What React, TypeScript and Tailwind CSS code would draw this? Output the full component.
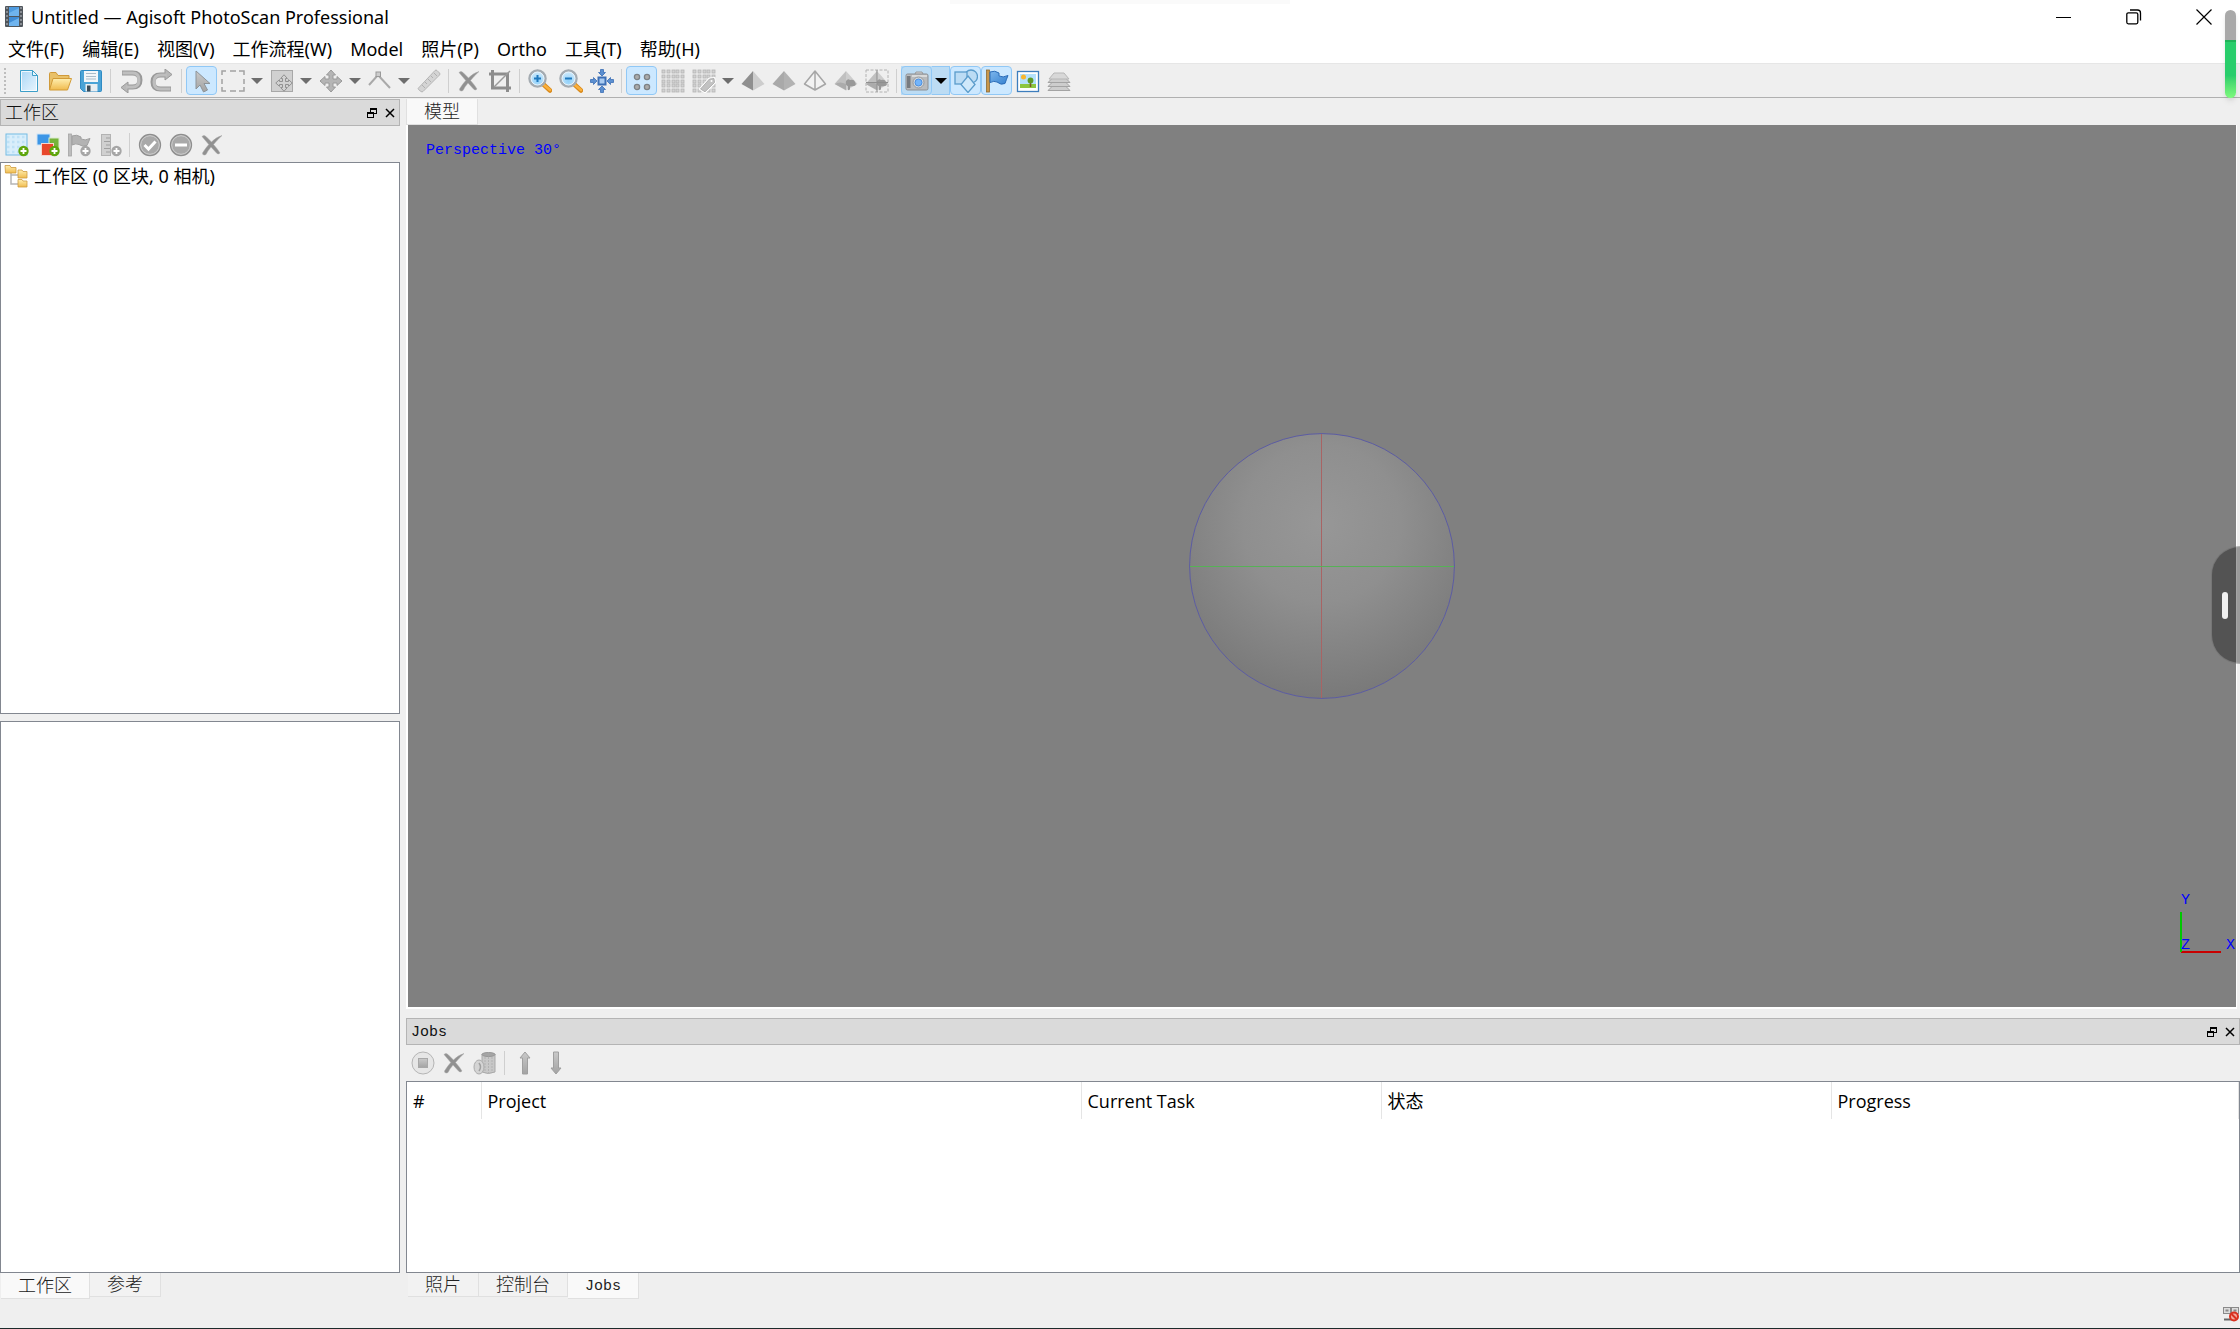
import type { ReactNode } from "react"

const UI = "font-['Open_Sans','Noto_Sans_CJK_SC',sans-serif]"
const MENU = "font-['Noto_Sans','Noto_Sans_CJK_SC',sans-serif]"
const SONG = "font-['Liberation_Mono','Noto_Sans_CJK_SC',monospace] font-light"

function Svg({ children, size = 24 }: { children: ReactNode; size?: number }) {
  return (
    <svg
      viewBox={`0 0 ${size} ${size}`}
      width={size}
      height={size}
      fill="none"
      aria-hidden="true"
      className="shrink-0"
    >
      {children}
    </svg>
  )
}

/* ---------- shared gradients ---------- */

function Defs() {
  return (
    <svg width="0" height="0" className="absolute" aria-hidden="true">
      <defs>
        <linearGradient id="gray" x1="0" y1="0" x2="0" y2="1">
          <stop offset="0" stopColor="#c9c9c9" />
          <stop offset="1" stopColor="#a3a3a3" />
        </linearGradient>
        <linearGradient id="sky" x1="0" y1="0" x2="1" y2="1">
          <stop offset="0" stopColor="#a9d6f5" />
          <stop offset="1" stopColor="#eaf6fe" />
        </linearGradient>
        <linearGradient id="folder" x1="0" y1="0" x2="0" y2="1">
          <stop offset="0" stopColor="#ffefb0" />
          <stop offset="1" stopColor="#f0bb4e" />
        </linearGradient>
        <linearGradient id="flag" x1="0" y1="0" x2="1" y2="1">
          <stop offset="0" stopColor="#7db6ec" />
          <stop offset="1" stopColor="#3480cf" />
        </linearGradient>
        <radialGradient id="lens" cx="0.5" cy="0.65" r="0.6">
          <stop offset="0" stopColor="#8ed0fa" />
          <stop offset="1" stopColor="#d2ebfb" />
        </radialGradient>
      </defs>
    </svg>
  )
}

/* ---------- icons ---------- */

const AppIcon = () => (
  <Svg>
    <rect x="3" y="1" width="18" height="21" rx="1" fill="#50565c" />
    <rect x="7" y="2" width="10" height="9" fill="#4e9be0" />
    <rect x="7" y="12" width="10" height="9" fill="#3f8cd6" />
    <path d="M7 8l10-5v8H7z M7 18l10-5v8H7z" fill="#6fb4ee" />
    <path d="M5 2v19M19 2v19" stroke="#9aa0a6" strokeWidth="1.500" strokeDasharray="2 2" />
  </Svg>
)

const NewIcon = () => (
  <Svg>
    <path d="M3.500 1.500h12l5 5v16h-17z" fill="url(#sky)" stroke="#3d9fc9" />
    <path d="M4.500 2.500h11l4 4v15h-15z" stroke="#fff" strokeOpacity="0.800" />
    <path d="M15.500 1.500v5h5z" fill="#eaf8ff" stroke="#3d9fc9" strokeLinejoin="round" />
  </Svg>
)

const OpenIcon = () => (
  <Svg>
    <path d="M1.500 20.500v-16q0-1 1-1h5.500l2 3h11v5" fill="#e9c169" stroke="#d09a3a" />
    <path d="M5 9.500h18.500l-4 11.500h-18z" fill="url(#folder)" stroke="#d29b37" strokeLinejoin="round" />
  </Svg>
)

const SaveIcon = () => (
  <Svg>
    <path d="M1.500 2.500q0-1 1-1h19q1 0 1 1v19q0 1-1 1h-17l-3-3z" fill="#4aa3d6" stroke="#2f8bc4" />
    <rect x="5" y="2" width="14" height="11" fill="#f2f6f9" />
    <path d="M7 4.500h10M7 7.500h10M7 10h10" stroke="#a9bcc9" />
    <rect x="6.500" y="15" width="12" height="7.500" fill="#e8eef2" />
    <rect x="8" y="16.500" width="3.500" height="6" fill="#3c4c57" />
  </Svg>
)

const UndoIcon = () => (
  <Svg>
    <path d="M3 4h10.500q7.500 0 7.500 7t-7.500 7H8" stroke="#999" strokeWidth="5" />
    <path d="M9 13v11l-7-5.500z" fill="#b8b8b8" stroke="#999" strokeLinejoin="round" />
    <path d="M3.500 4h10q6.500 0 6.500 7t-6.500 7H7" stroke="#bebebe" strokeWidth="3" />
  </Svg>
)

const RedoIcon = () => (
  <Svg>
    <path d="M21 20H10.500Q3 20 3 13t7.500-7H16" stroke="#999" strokeWidth="5" />
    <path d="M15 0v11l7-5.500z" fill="#b8b8b8" stroke="#999" strokeLinejoin="round" />
    <path d="M20.500 20h-10Q4 20 4 13t6.500-7H17" stroke="#bebebe" strokeWidth="3" />
  </Svg>
)

const PointerIcon = () => (
  <Svg>
    <path
      d="M6 2v18l4-4 3.500 7 4-2-3.500-6.500h6z"
      fill="url(#gray)"
      stroke="#8d9499"
      strokeLinejoin="round"
    />
  </Svg>
)

const MarqueeIcon = () => (
  <Svg>
    <path
      d="M1 6V2h4M9 2h6M18 2h5v4M23 10v5M23 18v4h-5M15 22H9M5 22H1v-4M1 15v-5"
      stroke="#a3a3a3"
      strokeWidth="1.500"
    />
  </Svg>
)

const ARROWS4 =
  "M12 1l4.500 5H14v4h4V7.500L23 12l-5 4.500V14h-4v4h2.500L12 23l-4.500-5H10v-4H6v2.500L1 12l5-4.500V10h4V6H7.500z"

const MoveBoxIcon = () => (
  <Svg>
    <rect x="1.500" y="1.500" width="21" height="21" fill="#d0d0d0" stroke="#a8a8a8" />
    <g transform="translate(5 5) scale(0.750)">
      <path d={ARROWS4} fill="#d2d2d2" stroke="#909090" strokeWidth="1.300" />
    </g>
  </Svg>
)

const MoveIcon = () => (
  <Svg>
    <path d={ARROWS4} fill="#b5b5b5" stroke="#9a9a9a" strokeLinejoin="round" />
  </Svg>
)

const PolylineIcon = () => (
  <Svg>
    <path d="M1 16L10 6l12 13" stroke="#a9a9a9" strokeWidth="2" />
    <rect x="8" y="3" width="4.500" height="4.500" fill="#ccc" stroke="#999" />
  </Svg>
)

const RulerIcon = () => (
  <Svg>
    <path
      d="M1.500 19L18 1.500q1-1 2 0l2.500 2.500q1 1 0 2L6 22.500q-1 .8-2 0l-2.500-2q-.8-.8 0-1.500z"
      fill="#d4d4d4"
      stroke="#b5b5b5"
    />
    <path d="M5 16l3 3M8 13l2 2M11 10l3 3M14 7l2 2M17 4l3 3" stroke="#b0b0b0" />
  </Svg>
)

const CrossIcon = () => (
  <Svg>
    <path
      d="M2 3.500Q4 1.500 6.500 4L11.500 9Q16 4 22 2.500Q17 7 13.500 11.500Q18 16.500 20 20Q18 22 16.500 20L11 14Q7.500 18 6 21.500Q2.500 23 2.500 20Q5.500 15 8.800 11.500Q5 7 2 3.500z"
      fill="#919191"
      stroke="#a8a8a8"
      strokeWidth="0.500"
    />
  </Svg>
)

const CropIcon = () => (
  <Svg>
    <path d="M4.500 1v18H23M1 5h18.500v18" stroke="#8d8d8d" strokeWidth="3" />
    <path d="M6 18L22 2" stroke="#9a9a9a" strokeWidth="1.500" />
  </Svg>
)

function ZoomIcon({ plus }: { plus?: boolean }) {
  return (
    <Svg>
      <path d="M15 15l7 6.500" stroke="#d98a1c" strokeWidth="4.500" strokeLinecap="round" />
      <path d="M16 16l6 5" stroke="#fbb03b" strokeWidth="2.500" strokeLinecap="round" />
      <circle cx="9.500" cy="9.500" r="8" fill="url(#lens)" stroke="#a4abb1" strokeWidth="2.500" />
      <circle cx="9.500" cy="9.500" r="6.500" stroke="#e8f3fa" />
      <path d={plus ? "M6 9.500h7M9.500 6v7" : "M6 9.500h7"} stroke="#1f78bd" strokeWidth="2" />
    </Svg>
  )
}

const FitIcon = () => (
  <Svg>
    <g fill="#5b8fd0" stroke="#3c6fb5" strokeWidth="0.800">
      <rect x="8.500" y="8.500" width="7" height="7" fill="#aacbf0" strokeWidth="2" />
      <path d="M10.500 0.500h3v3h2L12 7 8.500 3.500h2z" />
      <path d="M10.500 23.500h3v-3h2L12 17l-3.500 3.500h2z" />
      <path d="M0.500 10.500v3h3v2L7 12 3.500 8.500v2z" />
      <path d="M23.500 10.500v3h-3v2L17 12l3.500-3.500v2z" />
    </g>
  </Svg>
)

const DotsIcon = () => (
  <Svg>
    <g fill="#ababab" stroke="#7d8286" strokeWidth="1.300">
      <circle cx="7" cy="8" r="2.600" />
      <circle cx="17" cy="8" r="2.600" />
      <circle cx="7" cy="18" r="2.600" />
      <circle cx="17" cy="18" r="2.600" />
    </g>
  </Svg>
)

function DotGrid() {
  const steps = [1, 6, 11, 15, 20]
  return (
    <g fill="#d2d2d2" stroke="#b4b4b4" strokeWidth="0.800">
      {steps.map((y) => steps.map((x) => <rect key={`${x}-${y}`} x={x} y={y} width="3" height="3" />))}
    </g>
  )
}

const GridIcon = () => (
  <Svg>
    <DotGrid />
  </Svg>
)

const GridTagIcon = () => (
  <Svg>
    <DotGrid />
    <path d="M8 20l9.500-10.500 5-.5.500 4.500L13 23.500z" fill="#c9c9c9" stroke="#fff" strokeWidth="2" />
    <path d="M8.500 20l9-10 4.500-.5.500 4L13 22.800z" fill="#c2c2c2" stroke="#a5a5a5" strokeWidth="0.800" />
    <circle cx="19.500" cy="12" r="1" fill="#fff" />
  </Svg>
)

function PyramidIcon({ kind }: { kind: "shaded" | "solid" | "wire" | "tex" | "tiled" }) {
  if (kind === "wire") {
    return (
      <Svg>
        <path
          d="M12 2L1.500 15 12 21l10.500-6zM12 2v19"
          fill="#f2f2f2"
          stroke="#a6a6a6"
          strokeWidth="1.500"
          strokeLinejoin="round"
        />
      </Svg>
    )
  }
  return (
    <Svg>
      {kind === "tiled" && <rect x="1" y="1" width="22" height="22" stroke="#b2b2b2" strokeDasharray="3 1.500" />}
      <path
        d="M12 2L0.500 15 12 21.500z"
        fill={kind === "shaded" ? "#8f8f8f" : kind === "solid" ? "#a9a9a9" : "#c0c0c0"}
      />
      <path d="M12 2l11.500 13L12 21.500z" fill={kind === "solid" ? "#b2b2b2" : "#cdcdcd"} />
      {(kind === "tex" || kind === "tiled") && (
        <>
          <path d="M12 12q2-3 4-1 4-1 5 2 2 3-1 4l-4 .5v3l-2 .8v-4q-3-1-2-5.300z" fill="#999" />
          <path d="M1 15q5-3 11 0v6z" fill="#ababab" />
        </>
      )}
      {kind === "tiled" && <path d="M12 1v22M1 13.500h22" stroke="#8f8f8f" />}
    </Svg>
  )
}

const CameraIcon = () => (
  <Svg>
    <path d="M10 5l1-2h6l1 2" fill="#d5d5d5" stroke="#9a9a9a" />
    <rect x="1" y="5" width="22" height="16" rx="1.500" fill="#b9bbbd" stroke="#8b8f93" />
    <rect x="2" y="7" width="3.500" height="12" fill="#777b7f" />
    <path d="M7 7h15" stroke="#e4e4e4" strokeWidth="1.500" />
    <circle cx="13.500" cy="13.500" r="5.500" fill="#d5d8da" stroke="#95999d" />
    <circle cx="13.500" cy="13.500" r="3.500" fill="#73b5fb" stroke="#4c8fe0" />
  </Svg>
)

const ShapesIcon = () => (
  <Svg>
    <g fill="#bcdcf4" stroke="#5b9ccb" strokeWidth="1.300">
      <circle cx="17" cy="7.500" r="6.500" />
      <rect x="1" y="3" width="12" height="12" />
      <path d="M14 7l7 8.500-7 8-7-8z" fill="#cfe8fa" />
    </g>
  </Svg>
)

const FlagIcon = () => (
  <Svg>
    <rect x="1.500" y="1" width="3" height="22" fill="#c8974c" stroke="#8c6a35" strokeWidth="0.800" />
    <path
      d="M5 3q5-2 9 1v3q4 2 9-.5-1.500 3.500-3 8-4 2-8-1.500-3-1.500-7 .5z"
      fill="url(#flag)"
      stroke="#2b6cb8"
      strokeLinejoin="round"
    />
  </Svg>
)

const PictureIcon = () => (
  <Svg>
    <rect x="1.500" y="2.500" width="21" height="20" fill="#fff" stroke="#3d7dbd" strokeWidth="1.300" />
    <rect x="4" y="5" width="16" height="11" fill="#b4e1fb" />
    <rect x="4" y="15" width="16" height="4" fill="#8cc63f" />
    <circle cx="7.500" cy="8" r="2.500" fill="#f8b62d" />
    <path d="M14.500 13v5" stroke="#7a5526" strokeWidth="1.500" />
    <circle cx="14.500" cy="11.500" r="2.900" fill="#5e9a26" />
  </Svg>
)

const LayersIcon = () => (
  <Svg>
    <g stroke="#a3a3a3" fill="#cdcdcd" strokeLinejoin="round">
      <path d="M5 17.500h14l4 4H1z" />
      <path d="M5 13.500h14l4 4H1z" />
      <path d="M5 9.500h14l4 4H1z" />
      <path d="M7 4h10l5 6H2z" fill="#d8d8d8" stroke="#b7b7b7" />
    </g>
  </Svg>
)

function PlusBadge({ color }: { color: string }) {
  return (
    <>
      <circle cx="18.500" cy="18" r="5.200" fill={color} />
      <path d="M15.500 18h6M18.500 15v6" stroke="#fff" strokeWidth="1.800" />
    </>
  )
}

const AddChunkIcon = () => (
  <Svg>
    <rect x="1" y="1" width="21" height="21" fill="#d9eefb" stroke="#74bbe4" />
    <path
      d="M2 4h19M2 9h19M2 14h19M2 19h19"
      stroke="#bfe1f6"
      strokeWidth="2.500"
      strokeDasharray="2.500 2.500"
    />
    <PlusBadge color="#5fa60c" />
  </Svg>
)

const AddPhotosIcon = () => (
  <Svg>
    <rect x="1" y="1" width="13" height="11" fill="#3d96e6" stroke="#cfe3f5" />
    <rect x="13" y="5" width="10" height="12" fill="#76b33a" stroke="#dcebd0" />
    <rect x="5.500" y="10.500" width="12" height="12" fill="#e8472b" stroke="#f6d5cd" />
    <PlusBadge color="#5fa60c" />
  </Svg>
)

const AddMarkerIcon = () => (
  <Svg>
    <rect x="1.500" y="1" width="3" height="22" fill="#bdbdbd" stroke="#a5a5a5" strokeWidth="0.800" />
    <path d="M5 3q5-2 9 1v2q4 2 9-.5-1.500 3.500-3 7-4 2-8-1-3-1.500-7 .5z" fill="#b3b3b3" stroke="#a0a0a0" />
    <PlusBadge color="#a6a6a6" />
  </Svg>
)

const AddScaleIcon = () => (
  <Svg>
    <rect x="3.500" y="1.500" width="9" height="21" fill="#d0d0d0" stroke="#b3b3b3" />
    <path d="M8 5h4M6 8.500h6M8 12h4M6 15.500h6M8 19h4" stroke="#a0a0a0" />
    <PlusBadge color="#a6a6a6" />
  </Svg>
)

function RoundIcon({ d }: { d: string }) {
  return (
    <Svg>
      <circle cx="12" cy="12" r="10.500" fill="#a9a9a9" stroke="#8e8e8e" strokeWidth="1.300" />
      <circle cx="12" cy="12" r="9.300" stroke="#cfcfcf" />
      <path d={d} stroke="#fff" strokeWidth="3" />
    </Svg>
  )
}

const TreeIcon = () => (
  <Svg>
    <path d="M7 9v11h7M7 11h7" stroke="#b5b5b5" strokeWidth="1.500" />
    <g fill="url(#folder)" stroke="#cf9c40" strokeWidth="0.800" strokeLinejoin="round">
      <path d="M1 1.500h5l1 2h5v5.500H1.500z" />
      <path d="M14 6h4l1 1.500h4V14h-9z" />
      <path d="M14 15.500h4l1 1.500h4v6h-9z" />
    </g>
  </Svg>
)

const StopIcon = () => (
  <Svg>
    <circle cx="12" cy="12" r="11" fill="#e6e6e6" stroke="#b5b5b5" />
    <rect x="7.500" y="7.500" width="9" height="9" fill="url(#gray)" stroke="#a8a8a8" />
  </Svg>
)

const CleanIcon = () => (
  <Svg>
    <path d="M9 3v18q6 3 13 0V3z" fill="#c8c8c8" stroke="#a9a9a9" />
    <path d="M12 6v15M15.500 6v16M19 6v15" stroke="#b2b2b2" strokeDasharray="2 1" />
    <ellipse cx="15.500" cy="3.500" rx="6.500" ry="2" fill="#a5a5a5" stroke="#979797" />
    <ellipse cx="6" cy="16" rx="5" ry="7" fill="#d4d4d4" stroke="#ababab" />
    <path d="M6 12q3 4 0 8" stroke="#a0a0a0" strokeWidth="1.500" />
  </Svg>
)

function ArrowIcon({ down }: { down?: boolean }) {
  return (
    <Svg>
      <path
        d={down ? "M9.500 1h5v16h2.500l-5 6-5-6h2.500z" : "M9.500 23h5V7h2.500l-5-6-5 6h2.500z"}
        fill="url(#gray)"
        stroke="#9f9f9f"
      />
    </Svg>
  )
}

/* ---------- building blocks ---------- */

type ToolProps = { label: string; icon: ReactNode; on?: boolean; menu?: boolean }

function Tool({ label, icon, on, menu }: ToolProps) {
  return (
    <div className={`flex h-[29px] ${on && menu ? "bg-[#bcdcf4]" : ""}`}>
      <button
        type="button"
        aria-label={label}
        className={`flex w-[31px] items-center justify-center rounded-sm border ${
          on ? (menu ? "border-[#90c8f6]" : "border-[#90c8f6] bg-[#cce8ff]") : "border-transparent"
        }`}
      >
        {icon}
      </button>
      {menu && (
        <button
          type="button"
          aria-label={`${label} menu`}
          className={`flex w-[18px] items-center justify-center ${on ? "border-y border-r border-[#90c8f6]" : ""}`}
        >
          <svg width="12" height="6" viewBox="0 0 12 6" aria-hidden="true">
            <path d="M0 0h12L6 6z" fill={on ? "#000" : "#6d6d6d"} />
          </svg>
        </button>
      )}
    </div>
  )
}

function Sep() {
  return (
    <div className="flex w-[9px] justify-center">
      <div className="h-6 w-px bg-[#cfcfcf]" />
    </div>
  )
}

/* Chinese labels run a step larger than the half-width latin ones */
function DockText({ children }: { children: string }) {
  const latin = /^[\x00-\x7f]+$/.test(children)
  return <span className={latin ? "text-[15px]" : "text-lg"}>{children}</span>
}

function DockTitle({ title }: { title: string }) {
  return (
    <div className="flex h-[27px] items-center justify-between border border-[#b4b4b4] bg-[#dadada] px-1">
      <h2 className={`${SONG} pt-[2px] leading-6 text-[#111]`}>
        <DockText>{title}</DockText>
      </h2>
      <div className="flex gap-2">
        <button type="button" aria-label="Float">
          <svg width="10" height="10" viewBox="0 0 10 10" fill="none" shapeRendering="crispEdges" aria-hidden="true">
            <path d="M3 3V0h6v5H6M3 1h6M0 4h6v5H0zM0 5h6" stroke="#000" transform="translate(0.500 0.500)" />
          </svg>
        </button>
        <button type="button" aria-label="Close">
          <svg width="10" height="10" viewBox="0 0 10 10" aria-hidden="true">
            <path d="M1 1l8 8M9 1L1 9" stroke="#000" strokeWidth="1.500" />
          </svg>
        </button>
      </div>
    </div>
  )
}

function Tab({ label, active }: { label: string; active?: boolean }) {
  return (
    <button
      type="button"
      role="tab"
      aria-selected={!!active}
      className={`${SONG} flex items-center border-b border-r border-[#e0e0e0] px-[17px] pt-[2px] leading-5 text-[#222] ${
        active ? "h-[26px] bg-[#f9f9f9]" : "h-6 bg-[#f2f2f2]"
      }`}
    >
      <DockText>{label}</DockText>
    </button>
  )
}

const MENUS = ["文件(F)", "编辑(E)", "视图(V)", "工作流程(W)", "Model", "照片(P)", "Ortho", "工具(T)", "帮助(H)"]

function TitleBar() {
  return (
    <header className={`${MENU} bg-white`}>
      <div className="flex h-[34px] items-center">
        <div className="flex items-center gap-[5px] pl-[2px]">
          <AppIcon />
          <h1 className="text-lg leading-6 text-black">Untitled — Agisoft PhotoScan Professional</h1>
        </div>
        <div className="ml-auto mr-px flex">
          <button type="button" aria-label="Minimize" className="flex h-8 w-[70px] items-center justify-center">
            <Svg size={16}>
              <path d="M0 8.500h15" stroke="#000" />
            </Svg>
          </button>
          <button type="button" aria-label="Restore" className="flex h-8 w-[70px] items-center justify-center">
            <Svg size={16}>
              <rect x="0.800" y="3.800" width="11" height="11" rx="1.500" stroke="#000" strokeWidth="1.300" />
              <path d="M4 1h7.500q3 0 3 3v7.500" stroke="#000" strokeWidth="1.300" />
            </Svg>
          </button>
          <button type="button" aria-label="Close window" className="flex h-8 w-[70px] items-center justify-center">
            <Svg size={16}>
              <path d="M0.500 0.500l15 15M15.500 0.500l-15 15" stroke="#000" strokeWidth="1.200" />
            </Svg>
          </button>
        </div>
      </div>
      <nav className="flex h-[29px] gap-[18px] pl-2">
        {MENUS.map((m) => (
          <button key={m} type="button" className="whitespace-nowrap pt-px text-lg leading-7 text-black">
            {m}
          </button>
        ))}
      </nav>
    </header>
  )
}

function MainToolbar() {
  return (
    <div
      role="toolbar"
      aria-label="Main"
      className="flex h-[35px] items-center border-b border-t border-b-[#b0b0b0] border-t-[#e6e6e6] bg-[#efefef]"
    >
      <div className="ml-1 mr-[7px] h-[26px] w-[2px] border-l-2 border-dotted border-[#bdbdbd]" />
      <Tool label="New" icon={<NewIcon />} />
      <Tool label="Open" icon={<OpenIcon />} />
      <Tool label="Save" icon={<SaveIcon />} />
      <Sep />
      <Tool label="Undo" icon={<UndoIcon />} />
      <Tool label="Redo" icon={<RedoIcon />} />
      <Sep />
      <Tool label="Navigation" icon={<PointerIcon />} on />
      <Tool label="Selection" icon={<MarqueeIcon />} menu />
      <Tool label="Region" icon={<MoveBoxIcon />} menu />
      <Tool label="Object" icon={<MoveIcon />} menu />
      <Tool label="Draw" icon={<PolylineIcon />} menu />
      <Tool label="Ruler" icon={<RulerIcon />} />
      <Sep />
      <Tool label="Delete" icon={<CrossIcon />} />
      <Tool label="Crop" icon={<CropIcon />} />
      <Sep />
      <Tool label="Zoom In" icon={<ZoomIcon plus />} />
      <Tool label="Zoom Out" icon={<ZoomIcon />} />
      <Tool label="Reset View" icon={<FitIcon />} />
      <Sep />
      <Tool label="Sparse Cloud" icon={<DotsIcon />} on />
      <Tool label="Dense Cloud" icon={<GridIcon />} />
      <Tool label="Classes" icon={<GridTagIcon />} menu />
      <Tool label="Shaded" icon={<PyramidIcon kind="shaded" />} />
      <Tool label="Solid" icon={<PyramidIcon kind="solid" />} />
      <Tool label="Wireframe" icon={<PyramidIcon kind="wire" />} />
      <Tool label="Textured" icon={<PyramidIcon kind="tex" />} />
      <Tool label="Tiled Model" icon={<PyramidIcon kind="tiled" />} />
      <Sep />
      <Tool label="Cameras" icon={<CameraIcon />} on menu />
      <Tool label="Shapes" icon={<ShapesIcon />} on />
      <Tool label="Markers" icon={<FlagIcon />} on />
      <Tool label="Images" icon={<PictureIcon />} />
      <Tool label="Align" icon={<LayersIcon />} />
    </div>
  )
}

function WorkspaceDock() {
  return (
    <aside className="flex w-[400px] shrink-0 flex-col">
      <DockTitle title="工作区" />
      <div role="toolbar" aria-label="Workspace" className="flex h-9 items-center pl-px pt-px">
        <Tool label="Add Chunk" icon={<AddChunkIcon />} />
        <Tool label="Add Photos" icon={<AddPhotosIcon />} />
        <Tool label="Add Marker" icon={<AddMarkerIcon />} />
        <Tool label="Add Scale Bar" icon={<AddScaleIcon />} />
        <Sep />
        <Tool label="Enable" icon={<RoundIcon d="M6.500 12l4 4 7-7.500" />} />
        <Tool label="Disable" icon={<RoundIcon d="M6 12h12" />} />
        <Tool label="Remove" icon={<CrossIcon />} />
      </div>
      <div className="flex flex-1 flex-col gap-[7px]">
        <ul role="tree" className="flex-1 basis-0 border border-[#828790] bg-white">
          <li role="treeitem" className={`${MENU} flex items-center gap-[6px] pl-[3px] text-lg leading-[26px] text-black`}>
            <TreeIcon />
            工作区 (0 区块, 0 相机)
          </li>
        </ul>
        <div className="flex-1 basis-0 border border-[#828790] bg-white" />
      </div>
      <div role="tablist" className="flex h-[26px] items-start pl-px">
        <Tab label="工作区" active />
        <Tab label="参考" />
      </div>
    </aside>
  )
}

function Axes() {
  return (
    <svg
      width="60"
      height="72"
      viewBox="0 0 60 72"
      aria-hidden="true"
      className="absolute bottom-12 right-0 font-['Liberation_Mono',monospace] text-[15px]"
    >
      <path d="M5 65h40" stroke="#c80000" strokeWidth="2" />
      <path d="M5 25v40" stroke="#00c800" strokeWidth="2" />
      <g fill="#0000ff">
        <text x="5" y="17">Y</text>
        <text x="5" y="62">Z</text>
        <text x="50" y="62">X</text>
      </g>
    </svg>
  )
}

function ModelView() {
  return (
    <section className="flex flex-1 flex-col">
      <div role="tablist" className="flex h-[26px] items-start border-l border-[#e0e0e0]">
        <Tab label="模型" active />
      </div>
      <div className="relative mr-[3px] flex flex-1 items-center justify-center border-b-2 border-l-2 border-r border-white bg-[#808080]">
        <p className="absolute left-[18px] top-4 font-['Liberation_Mono',monospace] text-[15px] leading-5 text-[#0000ff]">
          Perspective 30°
        </p>
        <svg width="266" height="266" viewBox="0 0 266 266" aria-hidden="true">
          <defs>
            <radialGradient id="ball" cx="0.500" cy="0.340" r="0.660">
              <stop offset="0" stopColor="#979797" />
              <stop offset="0.450" stopColor="#8f8f8f" />
              <stop offset="0.800" stopColor="#818181" />
              <stop offset="1" stopColor="#797979" />
            </radialGradient>
          </defs>
          <circle cx="133" cy="133" r="132.400" fill="url(#ball)" stroke="#5c5ca3" />
          <g shapeRendering="crispEdges">
            <path d="M132.500 1v264" stroke="#a86464" />
            <path d="M1 133.500h264" stroke="#57b157" />
          </g>
        </svg>
        <Axes />
      </div>
    </section>
  )
}

function JobsDock() {
  const th = "border-r border-[#e5e5e5] px-[6px] text-left font-normal"
  return (
    <section className="flex h-[281px] shrink-0 flex-col">
      <DockTitle title="Jobs" />
      <div role="toolbar" aria-label="Jobs" className="flex h-9 items-center pl-px">
        <Tool label="Stop" icon={<StopIcon />} />
        <Tool label="Remove job" icon={<CrossIcon />} />
        <Tool label="Clear jobs" icon={<CleanIcon />} />
        <Sep />
        <Tool label="Move up" icon={<ArrowIcon />} />
        <Tool label="Move down" icon={<ArrowIcon down />} />
      </div>
      <div className="flex-1 border border-[#828790] bg-white">
        <table className={`${UI} w-full table-fixed border-collapse text-lg text-black`}>
          <thead>
            <tr className="h-[37px]">
              <th className={`${th} w-[74px]`}>#</th>
              <th className={`${th} w-[600px]`}>Project</th>
              <th className={`${th} w-[300px]`}>Current Task</th>
              <th className={`${th} w-[450px]`}>状态</th>
              <th className={th}>Progress</th>
            </tr>
          </thead>
        </table>
      </div>
      <div role="tablist" className="flex h-[26px] items-start pl-[2px]">
        <Tab label="照片" />
        <Tab label="控制台" />
        <Tab label="Jobs" active />
      </div>
    </section>
  )
}

/* Floating widgets of the desktop, docked to the screen edges */
function EdgeWidgets() {
  return (
    <>
      <div className="absolute left-1/2 top-0 h-1 w-[340px] -translate-x-1/2 bg-[#fafafa]" />
      <div className="absolute right-1 top-[10px] flex h-[88px] w-[11px] flex-col overflow-hidden rounded-full shadow-md">
        <div className="h-[30px] bg-[#a9a9a9]" />
        <div className="flex-1 border-t-2 border-[#20b158] bg-linear-to-b from-[#28cd6b] from-60% to-[#7dfa7d]" />
      </div>
      <div className="absolute right-0 top-[546px] flex h-[118px] w-[29px] items-center rounded-l-[29px] border-y border-l border-white/20 bg-black/35 pl-[10px]">
        <div className="h-[27px] w-[6px] rounded-full bg-[#f0f0f0]" />
      </div>
    </>
  )
}

export default function App() {
  return (
    <div className="relative flex min-h-screen flex-col overflow-hidden bg-[#efefef]">
      <Defs />
      <TitleBar />
      <MainToolbar />
      <main className="flex flex-1 gap-[6px] pt-px">
        <WorkspaceDock />
        <div className="flex min-w-0 flex-1 flex-col gap-[9px]">
          <ModelView />
          <JobsDock />
        </div>
      </main>
      <footer className="flex h-[30px] items-center justify-end border-b border-[#1c2b2b] pr-px">
        <svg width="16" height="16" viewBox="0 0 16 16" fill="none" aria-hidden="true">
          <rect x="0.500" y="1.500" width="7" height="6" fill="#ddd" stroke="#8a8a8a" />
          <rect x="8.500" y="1.500" width="7" height="6" fill="#ddd" stroke="#8a8a8a" />
          <rect x="2.500" y="3.500" width="3" height="2" fill="#8a8a8a" />
          <rect x="10.500" y="3.500" width="3" height="2" fill="#8a8a8a" />
          <path d="M1 13.500h8" stroke="#666" strokeWidth="2" />
          <circle cx="11" cy="10.500" r="4" fill="#f2a79c" stroke="#d9301f" strokeWidth="2" />
          <path d="M8.500 8l5 5" stroke="#d9301f" strokeWidth="2" />
        </svg>
      </footer>
      <EdgeWidgets />
    </div>
  )
}
